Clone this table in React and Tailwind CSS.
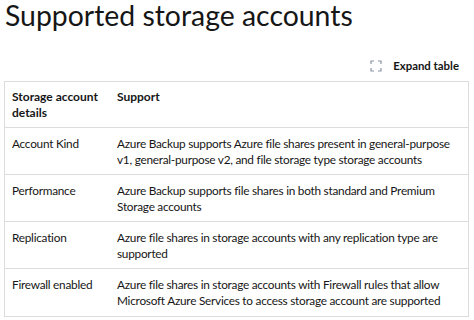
import React from "react";

const rows = [
  ["Account Kind", ["Azure Backup supports Azure file shares present in general-purpose", "v1, general-purpose v2, and file storage type storage accounts"]],
  ["Performance", ["Azure Backup supports file shares in both standard and Premium", "Storage accounts"]],
  ["Replication", ["Azure file shares in storage accounts with any replication type are", "supported"]],
  ["Firewall enabled", ["Azure file shares in storage accounts with Firewall rules that allow", "Microsoft Azure Services to access storage account are supported"]],
];

function ExpandIcon() {
  return (
    <svg width="12" height="12" viewBox="0 0 12 12" fill="none" stroke="#8a94a6" strokeWidth="1.2">
      <path d="M1 4V1h3M8 1h3v3M11 8v3H8M4 11H1V8" />
    </svg>
  );
}

export default function App() {
  return (
    <div className="w-[474px] h-[320px] bg-white overflow-hidden text-[#161616] font-['Lato',sans-serif]">
      <h1 className="pl-[5px] text-[28.4px] leading-[31px] font-normal">Supported storage accounts</h1>
      <div className="flex justify-end items-center gap-[11px] pr-[15px] mt-[25px] h-[20px]">
        <ExpandIcon />
        <span className="text-[11.4px] font-bold">Expand table</span>
      </div>
      <div className="ml-[4px] mt-[5px] w-[465px] border border-[#dcdcdc]">
        <div className="flex border-b border-[#dcdcdc] h-[46px] pt-[7px] text-[12px] font-bold leading-[16px]">
          <div className="w-[112px] shrink-0 pl-[7px]">Storage account<br />details</div>
          <div>Support</div>
        </div>
        {rows.map(([k, v], i) => (
          <div key={k} className={"flex h-[47px] pt-[8px] text-[11.8px] tracking-[-0.25px] leading-[16px] " + (i < rows.length - 1 ? "border-b border-[#dcdcdc]" : "")}>
            <div className="w-[112px] shrink-0 pl-[7px]">{k}</div>
            <div className="whitespace-nowrap">
              {v.map((l) => (
                <div key={l}>{l}</div>
              ))}
            </div>
          </div>
        ))}
      </div>
    </div>
  );
}
